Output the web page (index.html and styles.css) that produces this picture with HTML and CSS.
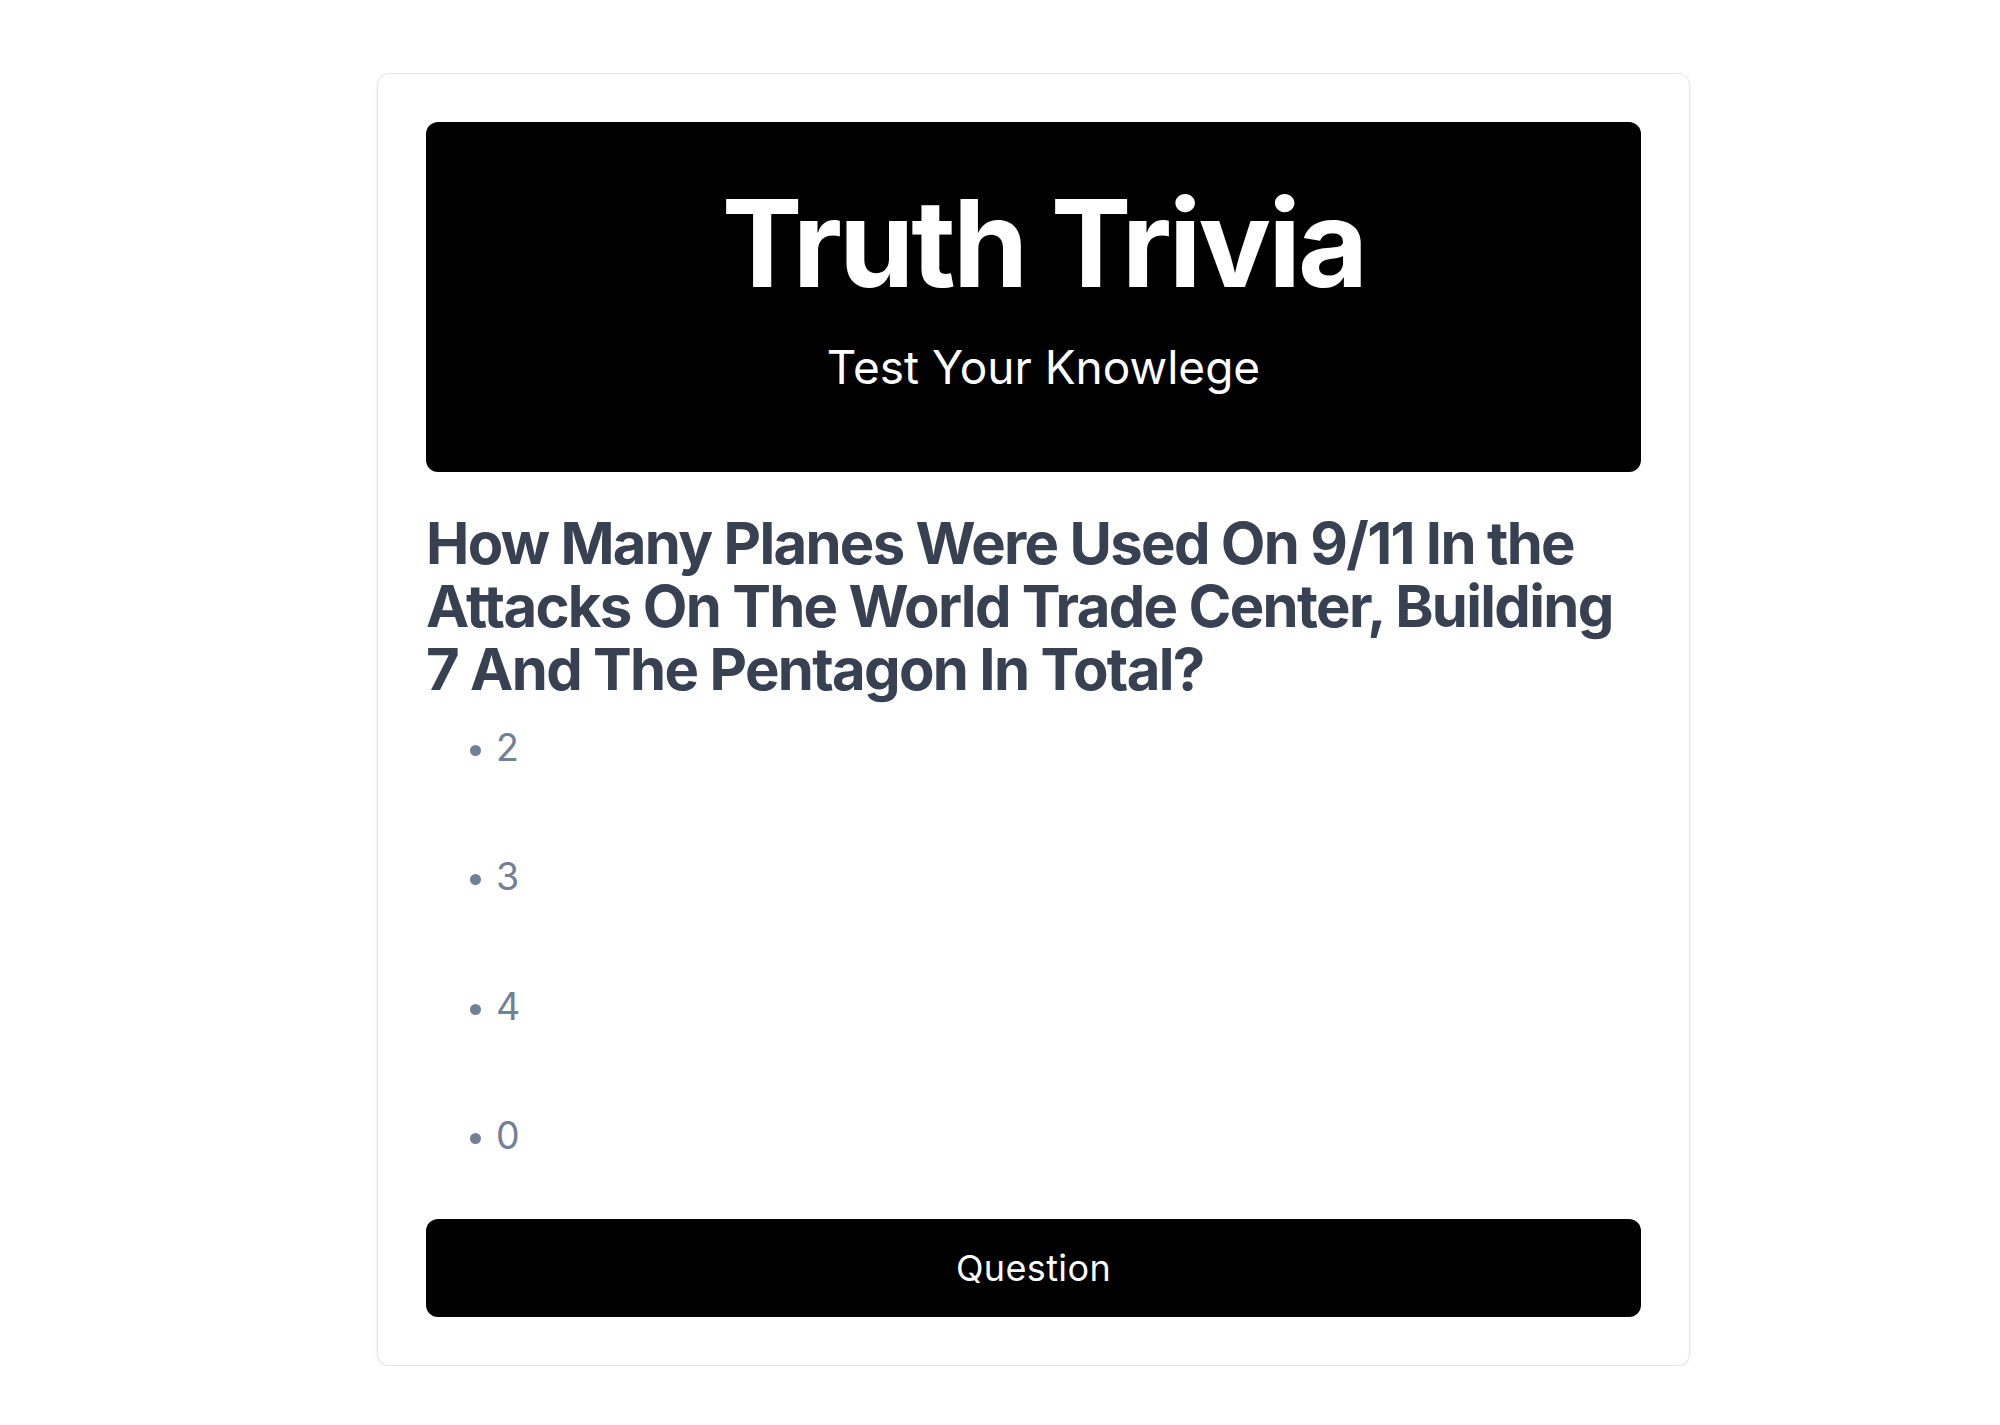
FILE: index.html
```html
<!DOCTYPE html>
<html lang="en">
<head>
<meta charset="utf-8">
<title>Truth Trivia</title>
<link rel="stylesheet" href="styles.css">
</head>
<body>
<main class="card">
  <header class="hero">
    <h1 class="hero-title">Truth Trivia</h1>
    <p class="hero-sub">Test Your Knowlege</p>
  </header>
  <h2 class="question">How Many Planes Were Used On 9/11 In the Attacks On The World Trade Center, Building 7 And The Pentagon In Total?</h2>
  <ul class="answers">
    <li>2</li>
    <li>3</li>
    <li>4</li>
    <li>0</li>
  </ul>
  <button class="btn" type="button">Question</button>
</main>
</body>
</html>
```

FILE: styles.css
```css
* { box-sizing: border-box; }

html, body {
  margin: 0;
  padding: 0;
  background: #ffffff;
  font-family: Inter, "Noto Sans", "Liberation Sans", sans-serif;
}

body {
  padding-top: 73px;
}

.card {
  display: flex;
  flex-direction: column;
  width: 1313px;
  margin-left: 377px;
  padding: 48px;
  border: 1px solid #e2e6eb;
  border-radius: 12px;
  background: #ffffff;
  box-shadow: 0 1px 3px rgba(0, 0, 0, 0.07);
}

.hero {
  background: #000000;
  color: #ffffff;
  border-radius: 12px;
  padding: 49px 24px 70px 44px;
  text-align: center;
}

.hero-title {
  margin: 0;
  font-size: 121px;
  line-height: 145px;
  font-weight: 700;
  letter-spacing: -0.025em;
}

.hero-sub {
  margin: 16px 0 0;
  font-size: 46px;
  line-height: 70px;
  font-weight: 400;
}

.question {
  margin: 40px 0 0;
  font-size: 58px;
  line-height: 63px;
  font-weight: 700;
  letter-spacing: -0.029em;
  color: #374151;
}

.answers {
  margin: 18.5px 0 0;
  padding-left: 44px;
  list-style: none;
  color: #718096;
  font-size: 37.5px;
  line-height: 56px;
}

.answers li::before {
  content: "";
  display: inline-block;
  width: 11px;
  height: 11px;
  margin-right: 15px;
  border-radius: 50%;
  background: currentColor;
  vertical-align: 5px;
}

.answers li + li {
  margin-top: 73.5px;
}

.btn {
  margin-top: 55px;
  height: 98px;
  width: 100%;
  border: 0;
  border-radius: 12px;
  background: #000000;
  color: #ffffff;
  font-family: Inter, "Noto Sans", "Liberation Sans", sans-serif;
  font-size: 36px;
  font-weight: 400;
  letter-spacing: 0.01em;
  cursor: pointer;
}
```
